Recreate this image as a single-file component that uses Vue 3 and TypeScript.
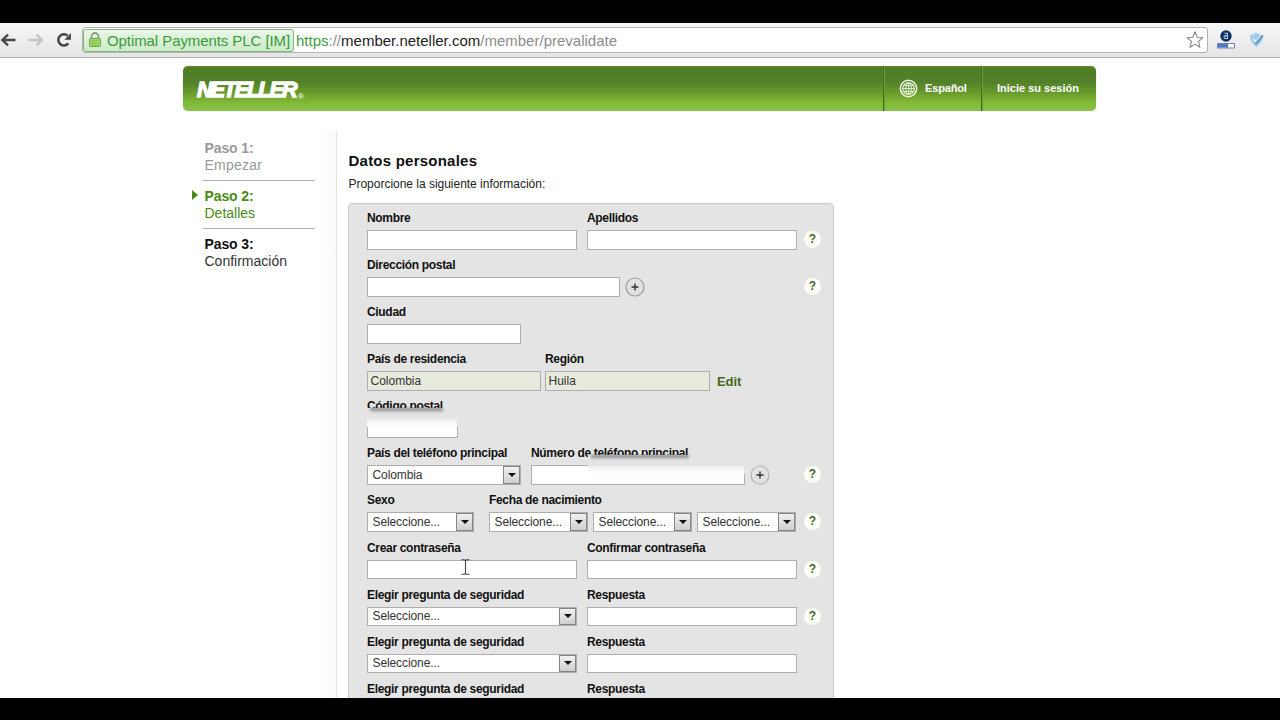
<script setup lang="ts">
interface Field {
  label: string
  width: number
  gap?: number
  kind?: 'text' | 'select' | 'locked'
  value?: string
  smudge?: 'all' | 'part'
}
interface Row {
  fields: Field[]
  plus?: boolean
  edit?: boolean
  help?: boolean
  cursor?: boolean
}

const rows: Row[] = [
  { fields: [{ label: 'Nombre', width: 210 }, { label: 'Apellidos', width: 210, gap: 10 }], help: true },
  { fields: [{ label: 'Dirección postal', width: 253 }], plus: true, help: true },
  { fields: [{ label: 'Ciudad', width: 154 }] },
  {
    fields: [
      { label: 'País de residencia', width: 174, kind: 'locked', value: 'Colombia' },
      { label: 'Región', width: 165, gap: 4, kind: 'locked', value: 'Huila' },
    ],
    edit: true,
  },
  { fields: [{ label: 'Código postal', width: 91, smudge: 'all' }] },
  {
    fields: [
      { label: 'País del teléfono principal', width: 154, kind: 'select', value: 'Colombia' },
      { label: 'Número de teléfono principal', width: 214, gap: 10, smudge: 'part' },
    ],
    plus: true,
    help: true,
  },
  {
    fields: [
      { label: 'Sexo', width: 107, kind: 'select', value: 'Seleccione...' },
      { label: 'Fecha de nacimiento', width: 99, gap: 15, kind: 'select', value: 'Seleccione...' },
      { label: '', width: 99, gap: 5, kind: 'select', value: 'Seleccione...' },
      { label: '', width: 99, gap: 5, kind: 'select', value: 'Seleccione...' },
    ],
    help: true,
  },
  { fields: [{ label: 'Crear contraseña', width: 210 }, { label: 'Confirmar contraseña', width: 210, gap: 10 }], help: true, cursor: true },
  ...[true, false, false].map((help): Row => ({
    fields: [
      { label: 'Elegir pregunta de seguridad', width: 210, kind: 'select', value: 'Seleccione...' },
      { label: 'Respuesta', width: 210, gap: 10 },
    ],
    help,
  })),
]

const steps = [
  { title: 'Paso 1:', name: 'Empezar', state: 'done' },
  { title: 'Paso 2:', name: 'Detalles', state: 'active' },
  { title: 'Paso 3:', name: 'Confirmación', state: 'next' },
]
</script>

<template>
  <div class="screen">
    <div class="toolbar">
      <svg class="nav" width="82" height="34" viewBox="0 0 82 34" fill="none">
        <path d="M15.500 17H3M8 11.700L2.400 17L8 22.300" stroke="#484848" stroke-width="2.400" />
        <path d="M28.500 17H41M36.500 11.700L42 17L36.500 22.300" stroke="#c4c4c4" stroke-width="2.300" />
        <path d="M68.300 20.400A5.600 5.600 0 1 1 67.600 12.600" stroke="#444" stroke-width="2.500" />
        <path d="M70.900 10.100V16.700H64.400Z" fill="#444" />
      </svg>
      <div class="omnibox">
        <div class="badge">
          <svg width="14" height="16" viewBox="0 0 14 16">
            <path d="M3.500 7V4.500a3.500 3.500 0 0 1 7 0V7" fill="none" stroke="#8d9a85" stroke-width="1.800" />
            <rect x="1.500" y="6.500" width="11" height="8" rx="1" fill="#a3d66e" stroke="#68a943" />
            <path d="M3 8.800H11M3 11H11M3 13H11" stroke="#7fbd50" stroke-width=".7" />
          </svg>
          <span>Optimal Payments PLC [IM]</span>
        </div>
        <div class="url"><span class="secure">https</span><span class="dim">://</span>member.neteller.com<span class="dim">/member/prevalidate</span></div>
        <svg class="star" width="20" height="20" viewBox="0 0 20 20">
          <path d="M10 1.800L12.200 7.300L18 7.700L13.500 11.400L15 17.300L10 14.100L5 17.300L6.500 11.400L2 7.700L7.800 7.300Z" fill="#fff" stroke="#858585" stroke-width="1.100" stroke-linejoin="round" />
        </svg>
      </div>
      <svg class="ext" width="73" height="34" viewBox="0 0 73 34">
        <circle cx="19" cy="13" r="5.700" fill="#102e60" />
        <path d="M17.500 10.300H20.300V15.500M20.300 12.600H18.400A1.300 1.300 0 0 0 18.400 15.500H21" stroke="#b5d2ef" stroke-width="1.100" fill="none" />
        <rect x="10.500" y="20.500" width="17" height="4.500" fill="#fff" stroke="#7081ad" />
        <rect x="11" y="21" width="10" height="3.600" fill="#5277c3" />
        <path d="M43 12Q46 12 49 9.500Q52 12 56 12Q56.500 19 49.500 24Q43 20 43 12Z" fill="#a5cbea" />
        <path d="M46 16L49 18.500L57 10" fill="none" stroke="#f1f8fd" stroke-width="1.500" />
        <path d="M48.500 21L56 12.500" stroke="#5e94c8" stroke-width="2" />
      </svg>
    </div>

    <header class="banner">
      <div class="logo"><span class="word">NETELLER</span><span class="reg">®</span></div>
      <div class="lang">
        <svg width="19" height="19" viewBox="0 0 19 19" fill="none" stroke="#f3faeb">
          <circle cx="9.500" cy="9.500" r="8.200" stroke-width="1.500" />
          <circle cx="9.500" cy="9.500" r="5.800" stroke-width="1.100" />
          <ellipse cx="9.500" cy="9.500" rx="2.700" ry="5.800" />
          <path d="M9.500 3.500V15.500M3.700 9.500H15.300M4.700 6.600H14.300M4.700 12.400H14.300" stroke-width=".8" />
        </svg>
        <span>Español</span>
      </div>
      <div class="login">Inicie su sesión</div>
    </header>

    <div class="body">
      <nav class="steps">
        <div v-for="s in steps" :key="s.title" class="step" :class="s.state">
          <b>{{ s.title }}</b>
          <span>{{ s.name }}</span>
        </div>
      </nav>
      <main class="content">
        <h1>Datos personales</h1>
        <p>Proporcione la siguiente información:</p>
        <form class="panel">
          <div v-for="(row, i) in rows" :key="i" class="row">
            <div
              v-for="(f, j) in row.fields"
              :key="j"
              class="field"
              :class="f.smudge ? 'smudge-' + f.smudge : ''"
              :style="{ width: f.width + 'px', marginLeft: (f.gap || 0) + 'px' }"
            >
              <label>{{ f.label }}</label>
              <div class="box" :class="f.kind || 'text'">
                <span v-if="f.value">{{ f.value }}</span>
                <i v-if="f.kind === 'select'" class="drop"><svg width="8" height="4" viewBox="0 0 8 4"><path d="M0 0H8L4 4Z" fill="#111" /></svg></i>
              </div>
              <i v-if="f.smudge" class="smear"></i>
            </div>
            <svg v-if="row.plus" class="plus" :class="{ faded: i === 5 }" width="20" height="20" viewBox="0 0 20 20">
              <circle cx="10" cy="10" r="9" fill="#e2e2e2" stroke="#999" stroke-width="1.200" />
              <path d="M6.500 10H13.500M10 6.500V13.500" stroke="#333" stroke-width="1.400" />
            </svg>
            <span v-if="row.edit" class="edit">Edit</span>
            <span v-if="row.help" class="help">?</span>
            <svg v-if="row.cursor" class="caret" width="9" height="16" viewBox="0 0 9 16">
              <path d="M.5 .8H3.500L4.500 1.600L5.500 .8H8.500M4.500 1.600V14.400M.5 15.200H3.500L4.500 14.400L5.500 15.200H8.500" fill="none" stroke="#444" stroke-width="1.100" />
            </svg>
          </div>
        </form>
      </main>
    </div>
  </div>
</template>

<style>
body { margin: 0; background: #000; overflow: hidden; }
</style>

<style scoped>
* { box-sizing: border-box; }
.screen {
  width: 1280px; height: 720px; overflow: hidden; background: #fff;
  border-top: 23px solid #000; border-bottom: 22px solid #000;
  font-family: "Liberation Sans", Arial, sans-serif; color: #111;
}
.toolbar {
  height: 35px; display: flex; align-items: flex-start;
  background: linear-gradient(#f6f6f6, #e5e5e5); border-bottom: 1px solid #b5b5b5;
}
.nav { flex: none; }
.omnibox {
  width: 1126px; height: 26px; margin-top: 4px; display: flex; align-items: center;
  background: #fff; border: 1px solid #b4b4b4; border-radius: 3px; font-size: 15px; white-space: nowrap;
}
.badge {
  width: 211px; height: 23px; display: flex; align-items: center; padding-left: 4px;
  border: 1px solid #82b783; border-radius: 3px; background: linear-gradient(#e9f7e7, #cbeac7);
  color: #3a9a3b; letter-spacing: -.08px;
}
.badge span { margin-left: 5px; }
.url { margin-left: 2px; color: #222; letter-spacing: 0; }
.secure { color: #3d9d40; }
.dim { color: #8c8c8c; }
.star { margin-left: auto; margin-right: 2px; }
.ext { margin-left: -1px; }

.banner {
  width: 913px; height: 45px; margin: 8px 0 0 183px; display: flex; border-radius: 5px;
  background: linear-gradient(#628c35 0, #507d23 5%, #52812a 36%, #67992b 58%, #82b936 82%, #8bc34b 100%);
  box-shadow: 0 0 1px #8f9b83; color: #fff; font-weight: bold; font-size: 11px;
}
.logo { flex: 1; display: flex; padding-left: 14px; }
.word {
  width: 100px; font: italic 900 21.500px/48px "Liberation Sans", Arial, sans-serif;
  letter-spacing: -1.850px; -webkit-text-stroke: 1.300px #fff;
}
.reg { margin: 25px 0 0 1px; font-size: 8px; line-height: 12px; font-weight: normal; }
.lang, .login { display: flex; align-items: center; border-left: 1px solid #446e1c; box-shadow: inset 1px 0 #6f9f3a; }
.lang { width: 98px; padding-left: 15px; }
.lang span { margin-left: 7px; letter-spacing: -.15px; }
.login { width: 115px; padding-left: 15px; white-space: nowrap; }
.lang span, .login { padding-bottom: 1px; }

.body { display: flex; margin-top: 20px; }
.steps {
  width: 154px; height: 567px; margin-left: 183px; padding: 1px 21px 0 20px;
  border-right: 1px solid #e4e4e4; background: linear-gradient(90deg, transparent 138px, #f9f9f9);
}
.step {
  position: relative; height: 48px; padding: 7px 0 0 1.500px; display: flex; flex-direction: column;
  font-size: 14px; line-height: 17px; border-bottom: 1px solid #adadad;
}
.step:first-child { height: 49px; padding-top: 8px; }
.step:last-child { border: 0; }
.step b { letter-spacing: -.1px; }
.done { color: #999; }
.done span { letter-spacing: .25px; }
.active { color: #4b8a13; }
.active::before {
  content: ""; position: absolute; left: -11px; top: 9px;
  border: 5px solid transparent; border-left: 6px solid #4b8a13; border-right: 0;
}
.next span { color: #333; }
.content { margin-left: 11px; padding-top: 20px; }
h1 { margin: 0 0 0 .5px; font-size: 15px; line-height: 20px; letter-spacing: .23px; }
p { margin: 6px 0 0 .5px; font-size: 12px; line-height: 15px; color: #222; letter-spacing: -.02px; }
.panel {
  width: 486px; height: 560px; margin-top: 11px; padding: 7px 0 0 18px;
  background: #e4e4e4; border: 1px solid #cbcbcb; border-radius: 4px;
}
.row { position: relative; height: 47.090px; display: flex; align-items: flex-start; }
.field { position: relative; flex: none; }
label { display: block; height: 19px; font-size: 12px; font-weight: bold; line-height: 14px; letter-spacing: -.32px; white-space: nowrap; color: #111; }
.box {
  height: 19.500px; display: flex; align-items: center; background: #fff; border: 1px solid #aeaeae;
  padding-left: 4.500px; font-size: 12px; color: #333; white-space: nowrap;
}
.box.locked { background: #e8eadd; padding-left: 2.500px; }
.select span { letter-spacing: -.1px; }
.drop {
  width: 17px; height: 17.500px; margin-left: auto; display: flex; align-items: center; justify-content: center;
  background: linear-gradient(#f1f1f1, #cfcfcf); border: 1px solid #858585;
}
.plus { margin: 18.500px 0 0 5px; }
.edit { margin: 22px 0 0 7px; font-size: 13px; line-height: 16px; font-weight: bold; color: #3f6b18; letter-spacing: -.1px; }
.help {
  position: absolute; left: 437px; top: 20px; width: 17px; height: 17px; border-radius: 50%;
  background: #fdfdf8; color: #4c6425; font-size: 12px; line-height: 17px; font-weight: bold; text-align: center;
}
.caret { position: absolute; left: 94px; top: 18px; }
/* smeared strip laid over the label's lower half and the box's top edge */
.smear {
  position: absolute; left: 0; right: -1px; top: 9px; height: 19px;
  background: linear-gradient(#e4e4e4 0, #e4e4e4 50%, #f4f4f4 72%, #fff 100%);
  border-right: 2px solid #e4e4e4;
}
.smear::before {
  content: ""; position: absolute; left: 3px; top: 0; width: 73px; height: 5px;
  background: linear-gradient(#4a4a4a, #aaa 55%, #e4e4e4); filter: blur(1px); opacity: .75;
}
.smudge-part .smear { left: 57px; top: 9px; height: 19px; }
.smudge-part .smear::before { width: 98px; }
.plus.faded circle { stroke: #b4b4b4; }
</style>
